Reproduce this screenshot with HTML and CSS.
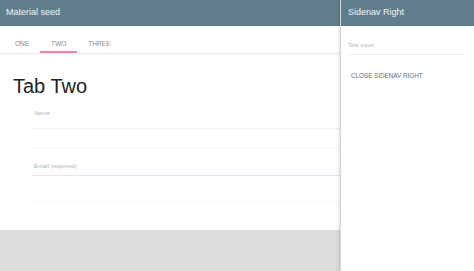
FILE: index.html
```html
<!DOCTYPE html>
<html lang="en">
<head>
    <meta charset="UTF-8">
    <meta name="viewport" content="width=device-width, initial-scale=1.0">
    <title>Material seed</title>
    <link rel="stylesheet" href="styles.css">
</head>
<body>

    <div class="main">
        <header class="toolbar">Material seed</header>
        <nav class="tabs">
            <span class="tab">One</span>
            <span class="tab active">Two</span>
            <span class="tab">Three</span>
        </nav>
        <section class="content">
            <h1>Tab Two</h1>
            <form class="form">
                <div class="field">
                    <label>Name</label>
                    <div class="line"></div>
                    <div class="hint"></div>
                </div>
                <div class="field email">
                    <label>Email (required)</label>
                    <div class="line"></div>
                    <div class="hint"></div>
                </div>
            </form>
        </section>
        <footer class="footer"></footer>
    </div>

    <aside class="sidenav">
        <header class="toolbar side">Sidenav Right</header>
        <div class="side-body">
            <div class="side-field">
                <label>Test input</label>
            </div>
            <button type="button" class="close-btn">Close Sidenav Right</button>
        </div>
    </aside>

</body>
</html>
```

FILE: styles.css
```css
html, body {
    height: 100%;
}
body {
    margin: 0;
    display: flex;
    font-family: "Liberation Sans", Arial, sans-serif;
    background: #fff;
    overflow: hidden;
}
.main {
    flex: 1;
    display: flex;
    flex-direction: column;
}
.toolbar {
    height: 26px;
    background-color: #607d8b;
    color: #f2f5f6;
    font-size: 9px;
    line-height: 24px;
    padding-left: 6px;
    box-sizing: border-box;
}
.tabs {
    height: 28px;
    display: flex;
    padding-left: 4px;
    border-bottom: 1px solid #eaeaea;
    box-sizing: border-box;
}
.tab {
    padding: 0 11px;
    font-size: 6.5px;
    text-transform: uppercase;
    color: #8a8a8a;
    line-height: 35px;
}
.tab.active {
    border-bottom: 2px solid #ef86aa;
}
.content {
    height: 176px;
}
h1 {
    margin: 20px 0 0 13px;
    font-size: 20px;
    font-weight: normal;
    color: #222;
    line-height: 24px;
}
.form {
    padding: 11px 0 0 33px;
}
.field label {
    display: block;
    font-size: 6px;
    color: #b4b4b4;
    padding-left: 1px;
    line-height: 8px;
}
.field .line {
    height: 11px;
    border-bottom: 1px solid #f0f0f0;
}
.field .hint {
    height: 19px;
    border-bottom: 1px solid #f6f6f6;
}
.field.email {
    margin-top: 13px;
}
.field.email .line {
    height: 5px;
    border-bottom-color: #f7dde5;
}
.field.email .hint {
    height: 25px;
}
.footer {
    flex: 1;
    background-color: #dcdcdc;
}
.sidenav {
    width: 133px;
    border-left: 1px solid #d4d8da;
    box-shadow: -1px 0 3px rgba(0, 0, 0, 0.15);
    background: #fff;
}
.toolbar.side {
    padding-left: 7px;
}
.side-body {
    padding: 15px 10px 0 6px;
}
.side-field {
    height: 13px;
    border-bottom: 1px solid #f0f0f0;
}
.side-field label {
    font-size: 6px;
    color: #b4b4b4;
    line-height: 8px;
    display: block;
    padding-left: 1px;
}
.close-btn {
    margin: 17px 0 0 4px;
    padding: 0;
    border: none;
    background: none;
    font-family: "Liberation Sans", Arial, sans-serif;
    font-size: 6.3px;
    text-transform: uppercase;
    color: #5f717a;
    cursor: pointer;
}
```
